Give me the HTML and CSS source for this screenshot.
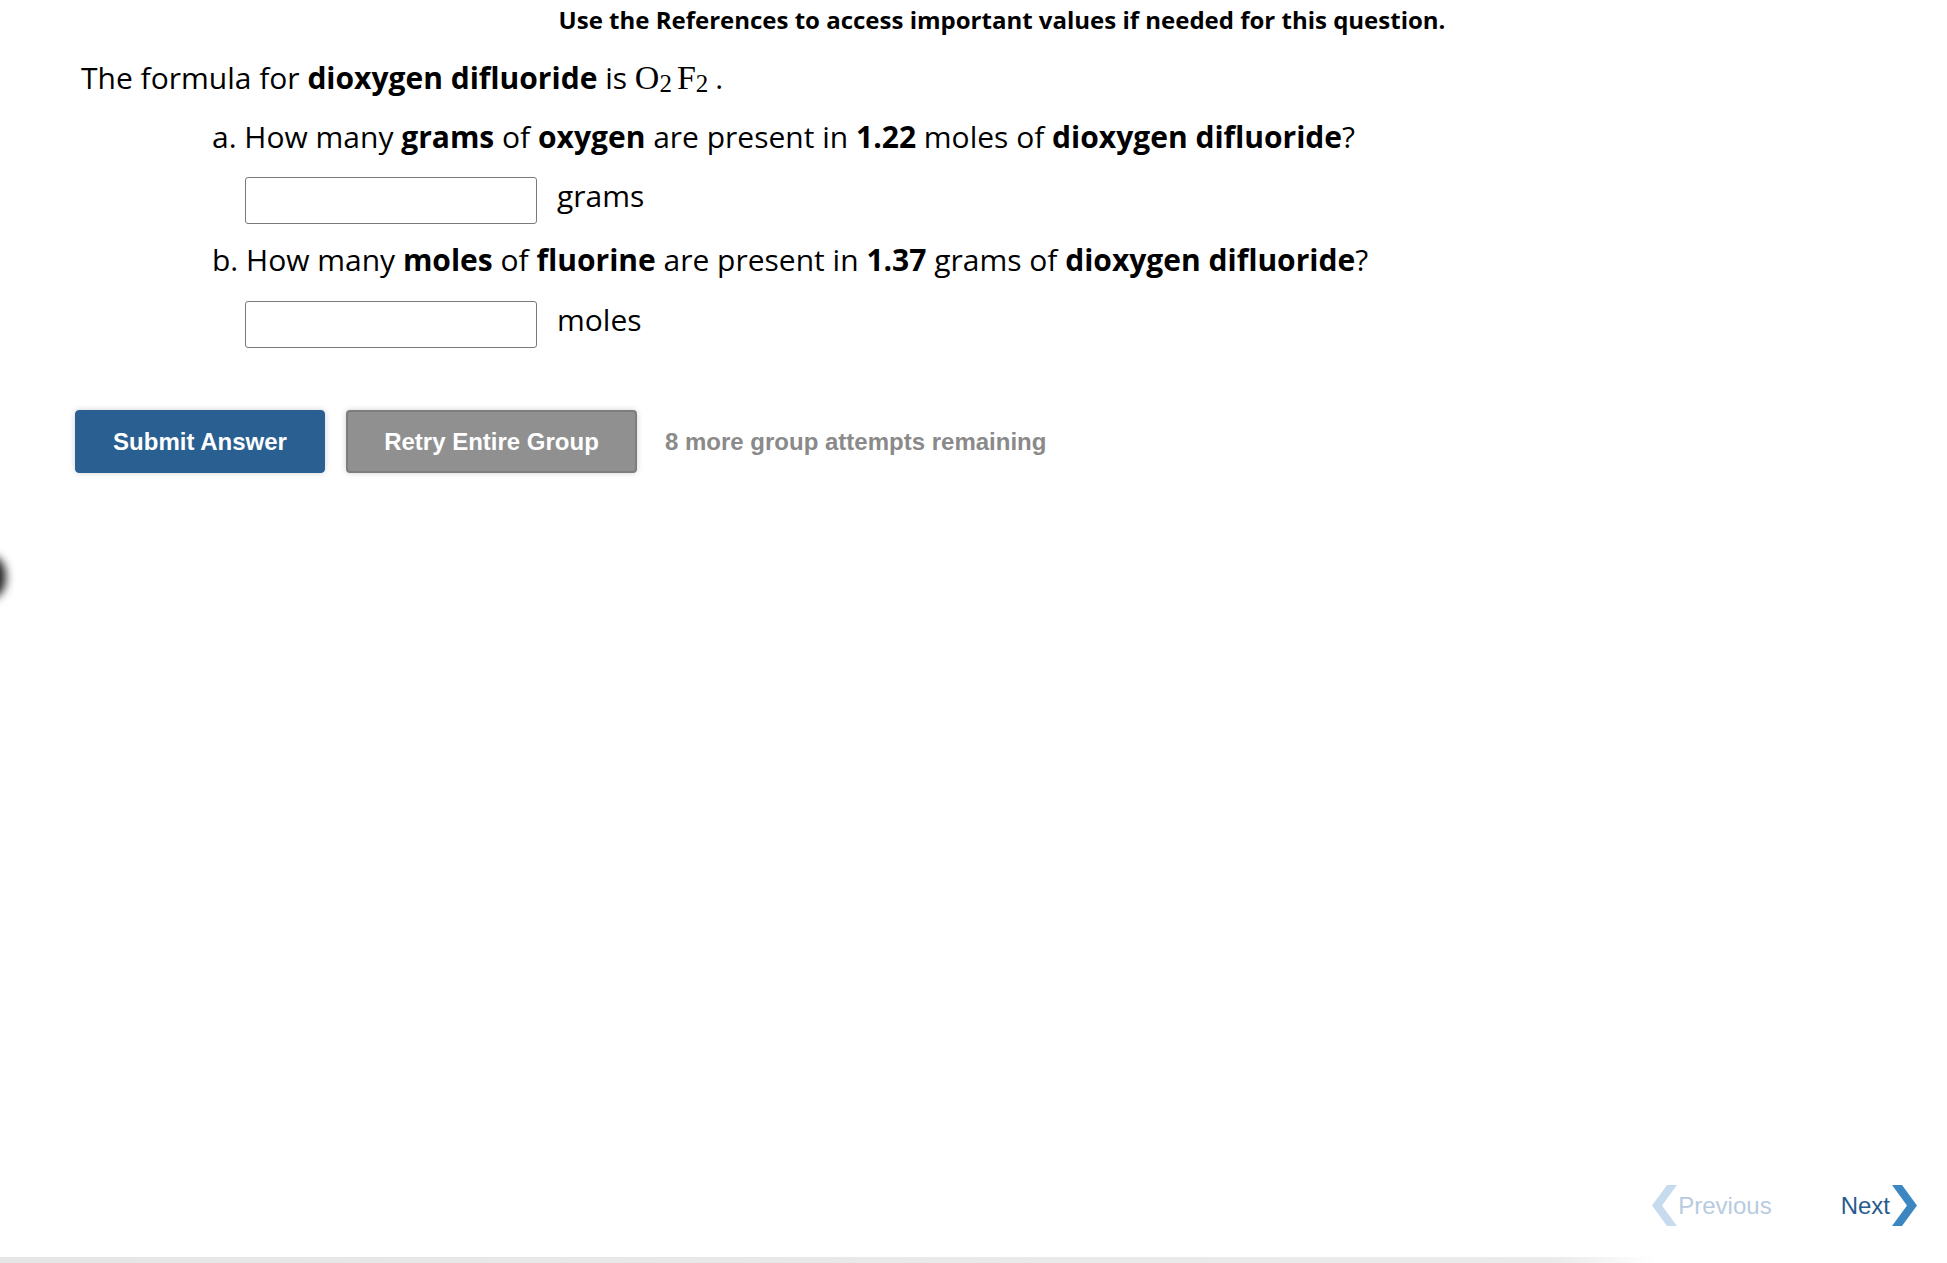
FILE: index.html
```html
<!DOCTYPE html>
<html lang="en">
<head>
<meta charset="utf-8">
<title>Question</title>
<link rel="stylesheet" href="styles.css">
</head>
<body>
<div class="page">
  <div class="edge-shadow"></div>
  <div class="header">Use the References to access important values if needed for this question.</div>
  <div class="question">
    <p class="intro">The formula for <b>dioxygen difluoride</b> is <span class="math"><span class="atom">O</span><sub>2</sub><span class="atom">F</span><sub class="last">2</sub></span>.</p>
    <div class="parts">
      <p class="part part-a">a. How many <b>grams</b> of <b>oxygen</b> are present in <b>1.22</b> moles of <b>dioxygen difluoride</b>?</p>
      <div class="answer answer-a"><input class="field" type="text"><span class="unit">grams</span></div>
      <p class="part part-b">b. How many <b>moles</b> of <b>fluorine</b> are present in <b>1.37</b> grams of <b>dioxygen difluoride</b>?</p>
      <div class="answer answer-b"><input class="field" type="text"><span class="unit">moles</span></div>
    </div>
  </div>
  <div class="actions">
    <button class="btn btn-submit" type="button">Submit Answer</button>
    <button class="btn btn-retry" type="button">Retry Entire Group</button>
    <span class="attempts">8 more group attempts remaining</span>
  </div>
  <div class="footer">
    <div class="nav">
      <a class="nav-link prev">
        <svg class="chev" width="25" height="41" viewBox="0 0 25 41"><polygon points="15,0 25,0 10,20.5 25,41 15,41 0,20.5" fill="#c6dcee"/></svg>
        <span>Previous</span>
      </a>
      <a class="nav-link next">
        <span>Next</span>
        <svg class="chev" width="25" height="41" viewBox="0 0 25 41"><polygon points="0,0 10,0 25,20.5 10,41 0,41 15,20.5" fill="#3c87c2"/></svg>
      </a>
    </div>
    <div class="bottom-bar"></div>
  </div>
</div>
</body>
</html>
```
FILE: styles.css
```css
html, body {
  margin: 0;
  padding: 0;
  background: #ffffff;
}
body {
  font-family: "Open Sans", "Liberation Sans", sans-serif;
  color: #000;
}
.page {
  position: relative;
  min-height: 100vh;
  display: flex;
  flex-direction: column;
}
.edge-shadow {
  position: absolute;
  left: -22px;
  top: 556px;
  width: 28px;
  height: 42px;
  border-radius: 50%;
  background: #222;
  filter: blur(5px);
}
.header {
  padding: 3px 0 0 57px;
  text-align: center;
  font-weight: 700;
  font-size: 24px;
  line-height: 33px;
}
.question {
  margin-left: 81px;
}
.intro {
  margin: 21px 0 0 0;
  font-size: 30px;
  line-height: 41px;
}
.math {
  font-family: "Liberation Serif", "DejaVu Serif", serif;
  font-size: 34px;
}
.math .atom {
  font-weight: 400;
}
.math sub {
  font-size: 25px;
  vertical-align: -3px;
  line-height: 0;
  margin-right: 5px;
}
.math sub.last {
  margin-right: 7px;
}
.parts {
  margin-left: 131px;
}
.part {
  font-size: 30px;
  line-height: 41px;
}
.part-a {
  margin: 18px 0 0 0;
}
.part-b {
  margin: 15px 0 0 0;
}
.answer {
  display: flex;
  align-items: flex-start;
  margin-left: 33px;
}
.answer-a {
  margin-top: 20px;
}
.answer-b {
  margin-top: 21px;
}
.field {
  box-sizing: border-box;
  width: 292px;
  height: 47px;
  margin: 0;
  border: 1.5px solid #7a7a7a;
  border-radius: 3px;
  background: #fff;
}
.unit {
  margin-left: 20px;
  font-size: 30px;
  line-height: 37px;
}
.actions {
  display: flex;
  align-items: center;
  margin: 62px 0 0 75px;
}
.btn {
  box-sizing: border-box;
  height: 63px;
  border-radius: 4px;
  font-family: "Liberation Sans", Arial, sans-serif;
  font-weight: 700;
  font-size: 24px;
  color: #fff;
  box-shadow: 0 0 6px rgba(0,0,0,0.18);
  cursor: pointer;
}
.btn-submit {
  width: 250px;
  background: #2a5f91;
  border: 1px solid #2a5f91;
}
.btn-retry {
  width: 291px;
  margin-left: 21px;
  background: #909090;
  border: 2px solid #7d7d7d;
}
.attempts {
  margin-left: 28px;
  font-family: "Liberation Sans", Arial, sans-serif;
  font-weight: 700;
  font-size: 24px;
  color: #8a8a8a;
}
.footer {
  margin-top: auto;
}
.nav {
  display: flex;
  justify-content: flex-end;
  align-items: center;
  gap: 69px;
  padding-right: 30px;
  margin-bottom: 31px;
}
.nav-link {
  display: flex;
  align-items: center;
  font-family: "Liberation Sans", Arial, sans-serif;
  font-size: 24px;
}
.prev {
  color: #b7cbe0;
}
.prev .chev {
  margin-right: 1px;
}
.next {
  color: #285b8e;
}
.next .chev {
  margin-left: 2px;
}
.bottom-bar {
  height: 6px;
  background: linear-gradient(to right, #e6e6e6 0%, #ebebeb 80%, rgba(255,255,255,0) 85%);
}
```
